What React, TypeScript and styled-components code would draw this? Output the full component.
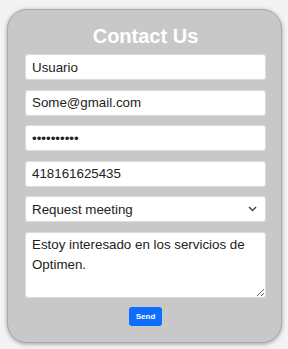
import styled, { createGlobalStyle } from "styled-components";

const GlobalStyle = createGlobalStyle`
  html, body {
    margin: 0;
    padding: 0;
    background: #f3f3f3;
    font-family: "Liberation Sans", Arial, sans-serif;
  }
`;

const Page = styled.div`
  padding: 9px 6px 6px 7px;
`;

const Card = styled.form`
  width: 275px;
  box-sizing: border-box;
  background: #c8c8c8;
  border: 1px solid #a9a9a9;
  border-radius: 20px;
  box-shadow: 0 1px 4px rgba(0, 0, 0, 0.35);
  padding: 14px 15px 16px 17px;
  display: flex;
  flex-direction: column;
  align-items: stretch;
`;

const Title = styled.h2`
  margin: 0 0 6px;
  text-align: center;
  color: #ffffff;
  font-size: 20px;
  line-height: 24px;
  font-weight: bold;
`;

const Field = styled.input`
  box-sizing: border-box;
  height: 26px;
  margin-bottom: 9.6px;
  padding: 0 6px;
  border: 1px solid #dcdcdc;
  border-radius: 3px;
  background: #ffffff;
  color: #222;
  font-family: "Liberation Sans", Arial, sans-serif;
  font-size: 13.33px;
  outline: none;
`;

const SelectWrap = styled.div`
  position: relative;
  margin-bottom: 9.6px;
  display: flex;
`;

const Select = styled.select`
  flex: 1;
  box-sizing: border-box;
  height: 26px;
  padding: 0 24px 0 6px;
  border: 1px solid #dcdcdc;
  border-radius: 3px;
  background: #ffffff;
  color: #222;
  font-family: "Liberation Sans", Arial, sans-serif;
  font-size: 13.33px;
  outline: none;
  appearance: none;
  -webkit-appearance: none;
`;

const Chevron = styled.svg`
  position: absolute;
  right: 9px;
  top: 10px;
  width: 9px;
  height: 6px;
  pointer-events: none;
`;

const Message = styled.textarea`
  box-sizing: border-box;
  height: 66px;
  margin: 0 0 9px;
  padding: 2px 6px;
  border: 1px solid #dcdcdc;
  border-radius: 3px;
  background: #ffffff;
  color: #222;
  font-family: "Liberation Sans", Arial, sans-serif;
  font-size: 13.33px;
  line-height: 20px;
  outline: none;
`;

const SendButton = styled.button`
  align-self: center;
  height: 19px;
  width: 33px;
  padding: 0;
  border: none;
  border-radius: 3px;
  background: #0d6efd;
  color: #ffffff;
  font-family: "Liberation Sans", Arial, sans-serif;
  font-size: 8px;
  font-weight: bold;
  cursor: pointer;
`;

const App = () => {
  return (
    <Page>
      <GlobalStyle />
      <Card onSubmit={(e) => e.preventDefault()}>
        <Title>Contact Us</Title>
        <Field type="text" defaultValue="Usuario" />
        <Field type="email" defaultValue="Some@gmail.com" />
        <Field type="password" defaultValue="1234567890" />
        <Field type="tel" defaultValue="418161625435" />
        <SelectWrap>
          <Select defaultValue="meeting">
            <option value="meeting">Request meeting</option>
            <option value="info">Request information</option>
          </Select>
          <Chevron viewBox="0 0 9 6">
            <path d="M1 1l3.5 3.5L8 1" fill="none" stroke="#444" strokeWidth="1.5" />
          </Chevron>
        </SelectWrap>
        <Message defaultValue="Estoy interesado en los servicios de Optimen." />
        <SendButton type="submit">Send</SendButton>
      </Card>
    </Page>
  );
};

export default App;
